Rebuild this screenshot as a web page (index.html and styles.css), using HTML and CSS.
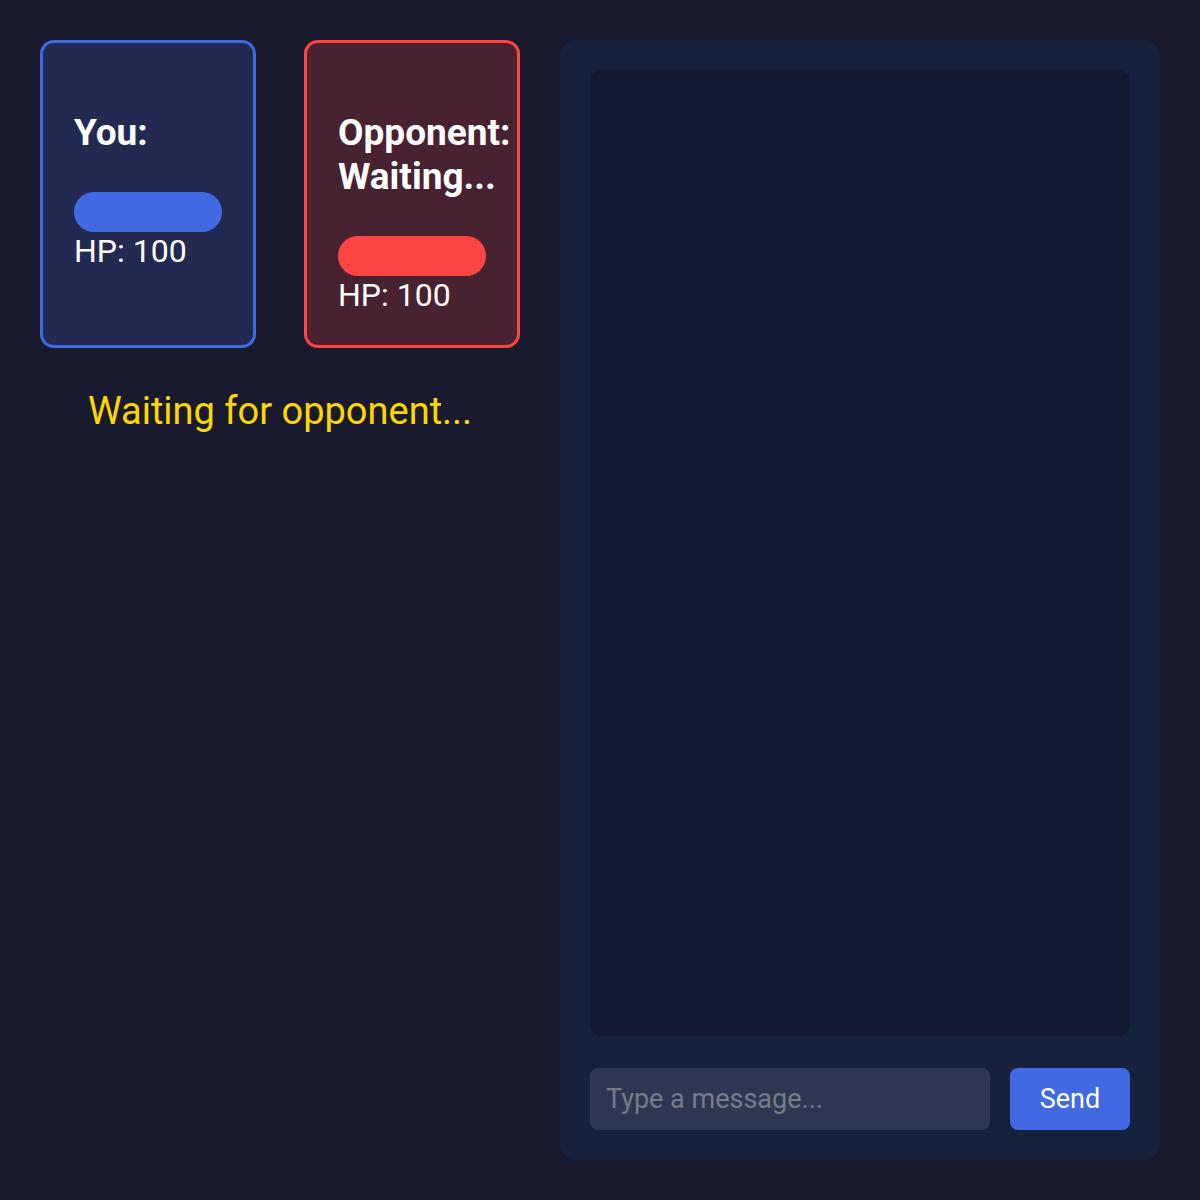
FILE: index.html
```html
<!DOCTYPE html>
<html>
<head>
<meta charset="utf-8">
<link rel="stylesheet" href="styles.css">
</head>
<body>
<div class="app">
  <div class="game">
    <div class="players">
      <div class="card card-you">
        <h2 class="name">You:</h2>
        <div class="bar bar-you"></div>
        <div class="hp">HP: 100</div>
      </div>
      <div class="card card-opp">
        <h2 class="name">Opponent: Waiting...</h2>
        <div class="bar bar-opp"></div>
        <div class="hp">HP: 100</div>
      </div>
    </div>
    <div class="status">Waiting for opponent...</div>
  </div>
  <div class="chat">
    <div class="messages"></div>
    <div class="composer">
      <input class="input" type="text" placeholder="Type a message...">
      <button class="send">Send</button>
    </div>
  </div>
</div>
</body>
</html>
```
FILE: styles.css
```css
* { box-sizing: border-box; }
html, body { margin: 0; padding: 0; }
body {
  background: #1a1a2e;
  color: #ffffff;
  font-family: Roboto, "Liberation Sans", sans-serif;
  width: 1200px;
  height: 1200px;
}
.app {
  display: flex;
  gap: 40px;
  padding: 40px;
  height: 1200px;
}
.game {
  width: 480px;
  flex: none;
}
.players {
  display: flex;
  gap: 48px;
}
.card {
  width: 216px;
  height: 308px;
  border: 3px solid;
  border-radius: 14px;
  padding: 31px;
}
.card-you {
  border-color: #4169e1;
  background: #222a52;
}
.card-opp {
  border-color: #ff4444;
  background: #492232;
}
.name {
  font-size: 37px;
  font-weight: 700;
  line-height: 44px;
  margin: 37px 0 37px;
  width: 180px;
}
.bar {
  height: 40px;
  border-radius: 20px;
  width: 148px;
}
.bar-you { background: #4169e1; }
.bar-opp { background: #ff4444; }
.hp {
  font-size: 32px;
  line-height: 38px;
}
.status {
  margin-top: 41px;
  text-align: center;
  color: #ffd700;
  font-size: 38px;
  line-height: 44px;
}
.chat {
  flex: 1;
  background: #16213e;
  border-radius: 16px;
  padding: 30px;
  display: flex;
  flex-direction: column;
  gap: 32px;
  height: 1120px;
}
.messages {
  flex: 1;
  background: #121a32;
  border-radius: 12px;
}
.composer {
  display: flex;
  gap: 20px;
  height: 62px;
}
.input {
  flex: 1;
  border: none;
  outline: none;
  border-radius: 8px;
  background: #2e3751;
  color: #ffffff;
  padding: 0 16px;
  font-family: Roboto, "Liberation Sans", sans-serif;
  font-size: 27px;
}
.input::placeholder { color: #757b8b; }
.send {
  width: 120px;
  border: none;
  border-radius: 8px;
  background: #4169e1;
  color: #ffffff;
  font-family: Roboto, "Liberation Sans", sans-serif;
  font-size: 27px;
}
```
